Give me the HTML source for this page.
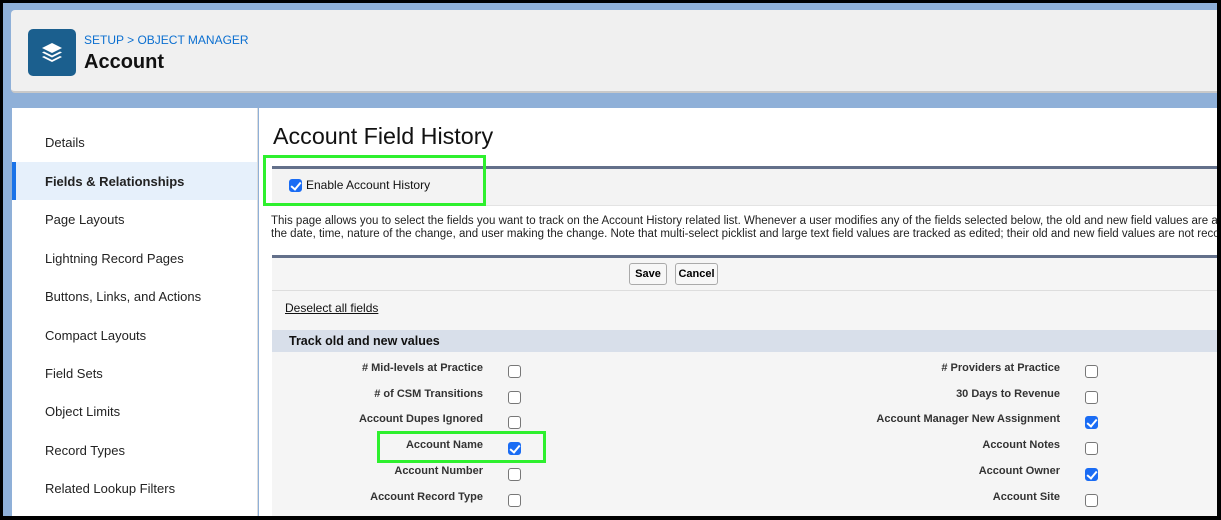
<!DOCTYPE html>
<html><head><style>
*{margin:0;padding:0;box-sizing:border-box}
body{width:1221px;height:520px;overflow:hidden;font-family:"Liberation Sans",Arial,sans-serif;background:#000;position:relative}
.frame{position:absolute;left:3px;top:3px;width:1214px;height:513px;background:#8fb0d8;overflow:hidden}
.abs{position:absolute}
.card{left:8px;top:7px;width:1210px;height:83px;background:#f0f0f0;border-radius:4px;border-bottom:2px solid #c9c9c9}
.icon{left:25px;top:26px;width:48px;height:47px;background:#1b5f8e;border-radius:5px}
.bc{left:81px;top:30px;font-size:12px;color:#0b6fd0}
.title{left:81px;top:48px;font-size:20px;font-weight:bold;color:#111}
.side{left:9px;top:105px;width:246px;height:420px;background:#fff;border-right:1px solid #ddd}
.side div{position:absolute;left:33px;font-size:13px;color:#222}
.main{left:256px;top:105px;width:960px;height:420px;background:#fff}
.cb{position:absolute;width:13px;height:13px;border:1px solid #777;border-radius:3px;background:#fff}
.cb.on{background:#1a6cf4;border-color:#1a6cf4}
.cb.on:after{content:"";position:absolute;left:3px;top:0px;width:4px;height:8px;border:solid #fff;border-width:0 2px 2px 0;transform:rotate(40deg)}
.lbl{position:absolute;font-size:11px;font-weight:bold;color:#333;text-align:right}
</style></head><body>
<div class="frame">
 <div class="abs card"></div>
 <div class="abs icon"><svg width="48" height="47" viewBox="0 0 48 47"><g fill="#fff"><path d="M24 14l10 5-10 5-10-5z"/><path d="M14 23.5l2-1 8 4 8-4 2 1-10 5z"/><path d="M14 28l2-1 8 4 8-4 2 1-10 5z"/></g></svg></div>
 <div class="abs bc">SETUP &gt; OBJECT MANAGER</div>
 <div class="abs title">Account</div>
 <div class="abs side">
  <div style="top:27px">Details</div>
  <div style="top:54px;left:0;width:245px;height:38px;background:#e6f0fb;border-left:4px solid #1a73e8"></div>
  <div style="top:66px;font-weight:bold">Fields &amp; Relationships</div>
  <div style="top:104px">Page Layouts</div>
  <div style="top:143px">Lightning Record Pages</div>
  <div style="top:181px">Buttons, Links, and Actions</div>
  <div style="top:220px">Compact Layouts</div>
  <div style="top:258px">Field Sets</div>
  <div style="top:296px">Object Limits</div>
  <div style="top:335px">Record Types</div>
  <div style="top:373px">Related Lookup Filters</div>
 </div>
 <div class="abs main">
  <div class="abs" style="left:14px;top:15px;font-size:23.3px;color:#111">Account Field History</div>
  <div class="abs" style="left:13px;top:58px;width:950px;height:40px;background:#f3f3f3;border-top:3px solid #63708a;border-bottom:1px solid #e3e3e3"></div>
  <div class="cb on" style="left:30px;top:71px"></div>
  <div class="abs" style="left:47px;top:70px;font-size:12px;color:#111">Enable Account History</div>
  <div class="abs" style="left:12px;top:107px;font-size:11.5px;color:#222;line-height:13px;white-space:nowrap">This page allows you to select the fields you want to track on the Account History related list. Whenever a user modifies any of the fields selected below, the old and new field values are added to the History related list as well as<br>the date, time, nature of the change, and user making the change. Note that multi-select picklist and large text field values are tracked as edited; their old and new field values are not recorded.</div>
  <div class="abs" style="left:13px;top:147px;width:950px;height:270px;background:#f5f5f5;border-top:3px solid #63708a"></div>
  <div class="abs" style="left:13px;top:182px;width:950px;height:1px;background:#ddd"></div>
  <div class="abs" style="left:370px;top:155px;width:38px;height:22px;border:1px solid #aaa;border-radius:3px;background:#f7f7f7;font-size:11px;font-weight:bold;text-align:center;line-height:20px">Save</div>
  <div class="abs" style="left:416px;top:155px;width:43px;height:22px;border:1px solid #aaa;border-radius:3px;background:#f7f7f7;font-size:11px;font-weight:bold;text-align:center;line-height:20px">Cancel</div>
  <div class="abs" style="left:26px;top:193px;font-size:12px;color:#111;text-decoration:underline">Deselect all fields</div>
  <div class="abs" style="left:13px;top:222px;width:950px;height:22px;background:#d8dfea"></div>
  <div class="abs" style="left:30px;top:226px;font-size:12.5px;font-weight:bold;color:#111">Track old and new values</div>
 </div>
 <div class="lbl" style="right:734px;top:359px"># Mid-levels at Practice</div>
 <div class="lbl" style="right:734px;top:385px"># of CSM Transitions</div>
 <div class="lbl" style="right:734px;top:410px">Account Dupes Ignored</div>
 <div class="lbl" style="right:734px;top:436px">Account Name</div>
 <div class="lbl" style="right:734px;top:462px">Account Number</div>
 <div class="lbl" style="right:734px;top:488px">Account Record Type</div>
 <div class="cb" style="left:505px;top:362px"></div>
 <div class="cb" style="left:505px;top:388px"></div>
 <div class="cb" style="left:505px;top:413px"></div>
 <div class="cb on" style="left:505px;top:439px"></div>
 <div class="cb" style="left:505px;top:465px"></div>
 <div class="cb" style="left:505px;top:491px"></div>
 <div class="lbl" style="right:157px;top:359px"># Providers at Practice</div>
 <div class="lbl" style="right:157px;top:385px">30 Days to Revenue</div>
 <div class="lbl" style="right:157px;top:410px">Account Manager New Assignment</div>
 <div class="lbl" style="right:157px;top:436px">Account Notes</div>
 <div class="lbl" style="right:157px;top:462px">Account Owner</div>
 <div class="lbl" style="right:157px;top:488px">Account Site</div>
 <div class="cb" style="left:1082px;top:362px"></div>
 <div class="cb" style="left:1082px;top:388px"></div>
 <div class="cb on" style="left:1082px;top:413px"></div>
 <div class="cb" style="left:1082px;top:439px"></div>
 <div class="cb on" style="left:1082px;top:465px"></div>
 <div class="cb" style="left:1082px;top:491px"></div>
 <div class="abs" style="left:260px;top:152px;width:223px;height:51px;border:3px solid #2ef02e"></div>
 <div class="abs" style="left:374px;top:428px;width:169px;height:32px;border:3px solid #2ef02e"></div>
</div>
</body></html>
